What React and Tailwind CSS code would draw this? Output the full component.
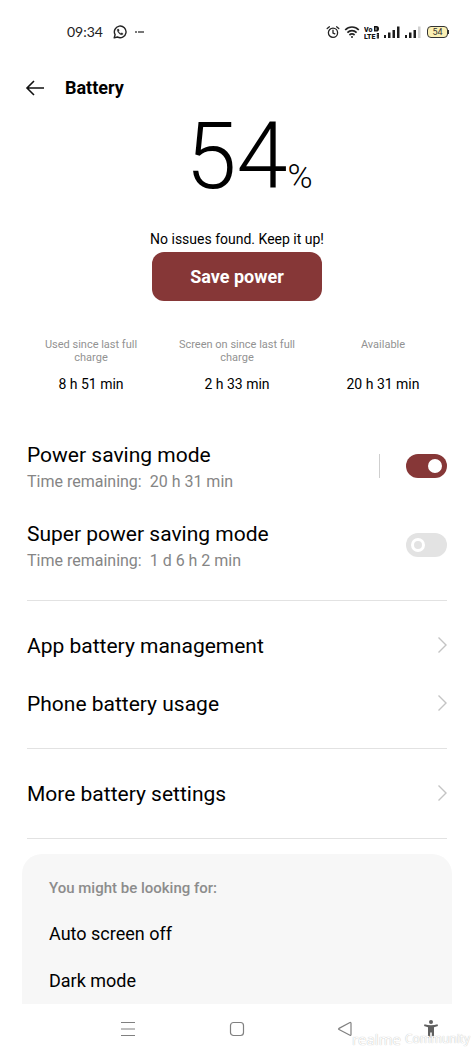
import { useState } from "react";

const stats = [
  { label: "Used since last full charge", value: "8 h 51 min" },
  { label: "Screen on since last full charge", value: "2 h 33 min" },
  { label: "Available", value: "20 h 31 min" },
];

const ChevronIcon = () => (
  <svg className="w-3 h-5" viewBox="0 0 12 20" fill="none" stroke="#c4c4c4" strokeWidth="1.4">
    <path d="M3.500 1.500 L11 9 L3.500 16.500" />
  </svg>
);

const SignalIcon = ({ weak }) => (
  <svg className="w-4 h-4" viewBox="0 0 16 16" fill="#1c1c1c">
    <rect x="0" y="11" width="2" height="3" />
    <rect x="4" y="8.500" width="2.500" height="5.500" />
    <rect x="8.500" y="6" width="2.500" height="8" />
    <rect x="13" y="2.500" width="2.500" height="11.500" fill={weak ? "#d0d0d0" : "#1c1c1c"} />
  </svg>
);

const StatusBar = () => (
  <div className="flex items-center justify-between h-16 pl-[67px] pr-[25px]">
    <div className="flex items-center">
      <span className="font-['Lato',sans-serif] text-[14px] leading-5 text-[#222]">09:34</span>
      <svg className="w-[14px] h-[14px] ml-[10px]" viewBox="0 0 24 24" fill="none" stroke="#222" strokeWidth="2.4">
        <path d="M2 22 L3.6 16.6 A10 10 0 1 1 7.5 20.5 Z" strokeLinejoin="round" />
        <path
          d="M8 7 C6.5 8.5 7.5 11.5 10 14 C12.5 16.5 15.5 17.5 17 16 L17 14.5 L14.7 13.4 L13.5 14.6 C12 14 10.2 12.2 9.5 10.6 L10.6 9.4 L9.6 7 Z"
          fill="#222"
          strokeWidth="0.6"
        />
      </svg>
      <svg className="w-[10px] h-1 ml-2" viewBox="0 0 10 4" fill="#777">
        <rect x="0" y="1" width="2" height="2" />
        <rect x="3" y="1" width="6" height="2" />
      </svg>
    </div>

    <div className="flex items-center">
      <svg className="w-[14px] h-[14px]" viewBox="0 0 14 14" fill="none" stroke="#222" strokeWidth="1.3" strokeLinecap="round">
        <circle cx="7" cy="7.7" r="4.6" />
        <path d="M7 5.2 V8 L8.8 8.8 M1.2 3.6 L3.4 1.8 M12.8 3.6 L10.6 1.8" />
      </svg>
      <svg className="w-4 h-4 ml-1" viewBox="0 0 16 16" fill="none" stroke="#222" strokeWidth="1.7">
        <path d="M1.2 6 C5 2 11 2 14.8 6" />
        <path d="M3.4 8.6 C6 6 10 6 12.6 8.6" />
        <path d="M5.4 11 C7 9.6 9 9.6 10.6 11" />
        <circle cx="8" cy="13" r="1" fill="#222" stroke="none" />
      </svg>
      <svg className="w-4 h-4 ml-1" viewBox="0 0 16 16" fill="#111">
        <text x="0" y="7.500" className="font-['Roboto',sans-serif] font-black text-[7px]">
          Vo
        </text>
        <text x="0" y="14.500" className="font-['Roboto',sans-serif] font-black text-[7px]">
          LTE
        </text>
        <path
          d="M10 2 H12.500 Q15 2 15 4.800 Q15 7.600 12.500 7.600 H10 Z M11.600 3.400 V6.200 H12.400 V3.400 Z"
          fillRule="evenodd"
        />
        <path
          d="M12.800 9 H15 V14.500 H12.800 Z M13.600 10.200 V11.200 H14.200 V10.200 Z M13.600 12.400 V13.400 H14.200 V12.400 Z"
          fillRule="evenodd"
        />
      </svg>
      <span className="flex gap-[5px] ml-1">
        <SignalIcon />
        <SignalIcon weak />
      </span>
      <span className="flex items-center ml-[6px]">
        <span className="flex items-center justify-center w-[21px] h-3 rounded-[4px] border border-[#333] bg-[#fbf0b4] font-['Roboto',sans-serif] text-[9px] leading-[10px] text-[#333]">
          54
        </span>
        <span className="w-px h-1 bg-[#333]" />
      </span>
    </div>
  </div>
);

const ModeRow = ({ id, title, remaining, checked, onChange, divided }) => (
  <div className="flex items-center justify-between h-[79px]">
    <div className="pt-1">
      <label htmlFor={id} className="block text-[21px] leading-7">
        {title}
      </label>
      <p className="text-[16px] leading-[26px] text-[#858585] whitespace-pre">Time remaining:  {remaining}</p>
    </div>
    <div className="flex items-center gap-[26px]">
      {divided && <span className="w-px h-6 bg-[#cfcfcf]" />}
      <input
        id={id}
        type="checkbox"
        checked={checked}
        onChange={(e) => onChange(e.target.checked)}
        className="appearance-none flex items-center w-[41px] h-6 px-[5px] rounded-full cursor-pointer bg-[#e3e3e3] checked:bg-[#863737] checked:justify-end before:content-[''] before:w-[14px] before:h-[14px] before:rounded-full before:border-[3px] before:border-white checked:before:bg-white"
      />
    </div>
  </div>
);

const LinkRow = ({ title }) => (
  <a href="#" className="flex items-center justify-between h-[58px] text-[21px] leading-7">
    {title}
    <ChevronIcon />
  </a>
);

const NavBar = () => (
  <nav className="relative flex items-center gap-[68px] h-[49px] pl-[119px] pr-[34px]">
    <div className="flex flex-1 items-center justify-between">
      <button aria-label="Recent apps" className="w-[18px] h-[18px]">
        <svg viewBox="0 0 18 18" stroke="#808080" strokeWidth="1.2">
          <path d="M2 2.500 H16 M2 9 H16 M2 15.500 H16" />
        </svg>
      </button>
      <button aria-label="Home" className="w-[18px] h-[18px]">
        <svg viewBox="0 0 18 18" fill="none" stroke="#808080" strokeWidth="1.2">
          <rect x="2.500" y="2.500" width="13" height="13" rx="3" />
        </svg>
      </button>
      <button aria-label="Back" className="w-[18px] h-[18px]">
        <svg viewBox="0 0 18 18" fill="none" stroke="#808080" strokeWidth="1.2" strokeLinejoin="round">
          <path d="M3 9.500 Q2 9 3 8.400 L14 2.500 Q15 2.300 15 3.500 V14.500 Q15 15.600 14 15.200 Z" />
        </svg>
      </button>
    </div>
    <button aria-label="Accessibility" className="w-[18px] h-[18px]">
      <svg viewBox="0 0 18 18" fill="#606060">
        <circle cx="9" cy="2" r="2" />
        <path d="M2.500 4.200 Q9 6.500 15.500 4.200 L16 6 L12 7.200 V18 H9.800 V12.500 H8.200 V18 H6 V7.200 L2 6 Z" />
      </svg>
    </button>
    <div className="absolute right-1 bottom-1 flex items-center gap-1 font-['Open_Sans',sans-serif] text-white leading-5 [text-shadow:0_0_1px_#bbb,0_0_1px_#ddd] pointer-events-none">
      <span className="text-[15px] font-medium">realme</span>
      <span className="text-[12px]">Community</span>
    </div>
  </nav>
);

export default function App() {
  const [saving, setSaving] = useState(true);
  const [superSaving, setSuperSaving] = useState(false);

  return (
    <div className="flex flex-col min-h-screen bg-white text-black font-['Roboto',sans-serif]">
      <StatusBar />

      <header className="flex items-center gap-5 h-12 px-[25px]">
        <button aria-label="Back" className="w-5 h-5">
          <svg viewBox="0 0 20 20" fill="none" stroke="#111" strokeWidth="1.6">
            <path d="M19 10 H2 M9 3 L2 10 L9 17" />
          </svg>
        </button>
        <h1 className="text-[18px] leading-6 font-bold">Battery</h1>
      </header>

      <main className="flex flex-col flex-1">
        <section className="flex flex-col items-center">
          <div className="flex items-baseline pl-6 h-[117px]">
            <span className="text-[92px] leading-[90px] font-[350]">54</span>
            <span className="text-[34px] leading-10 font-[350]">%</span>
          </div>
          <p className="text-[14px] leading-5">No issues found. Keep it up!</p>
          <button className="mt-[3px] w-[170px] h-[49px] rounded-xl bg-[#863737] text-white text-[18px] font-bold cursor-pointer">
            Save power
          </button>
        </section>

        <section className="grid grid-cols-3 mt-[37px] px-[18px] text-center">
          {stats.map((item) => (
            <div key={item.label} className="flex flex-col items-center">
              <p className="h-[26px] px-3 text-[11px] leading-[13px] text-[#929292]">{item.label}</p>
              <p className="mt-[6px] py-1 text-[14px] leading-5">{item.value}</p>
            </div>
          ))}
        </section>

        <section className="mt-7 pb-4 mx-[27px] border-b border-[#e2e2e2]">
          <ModeRow
            id="power-saving"
            title="Power saving mode"
            remaining="20 h 31 min"
            checked={saving}
            onChange={setSaving}
            divided
          />
          <ModeRow
            id="super-power-saving"
            title="Super power saving mode"
            remaining="1 d 6 h 2 min"
            checked={superSaving}
            onChange={setSuperSaving}
          />
        </section>

        <section className="mx-[27px] pt-4 pb-[15px] border-b border-[#e2e2e2]">
          <LinkRow title="App battery management" />
          <LinkRow title="Phone battery usage" />
        </section>

        <section className="mx-[27px] pt-4 pb-[15px] border-b border-[#e2e2e2]">
          <LinkRow title="More battery settings" />
        </section>

        <section className="flex-1 mt-[15px] mx-[22px] px-[27px] pt-6 rounded-t-[20px] bg-[#f7f7f7]">
          <h2 className="text-[15px] leading-5 font-medium text-[#8c8c8c]">You might be looking for:</h2>
          <a href="#" className="block mt-6 text-[18px] leading-6">
            Auto screen off
          </a>
          <a href="#" className="block mt-[23px] text-[18px] leading-6">
            Dark mode
          </a>
        </section>
      </main>

      <NavBar />
    </div>
  );
}
